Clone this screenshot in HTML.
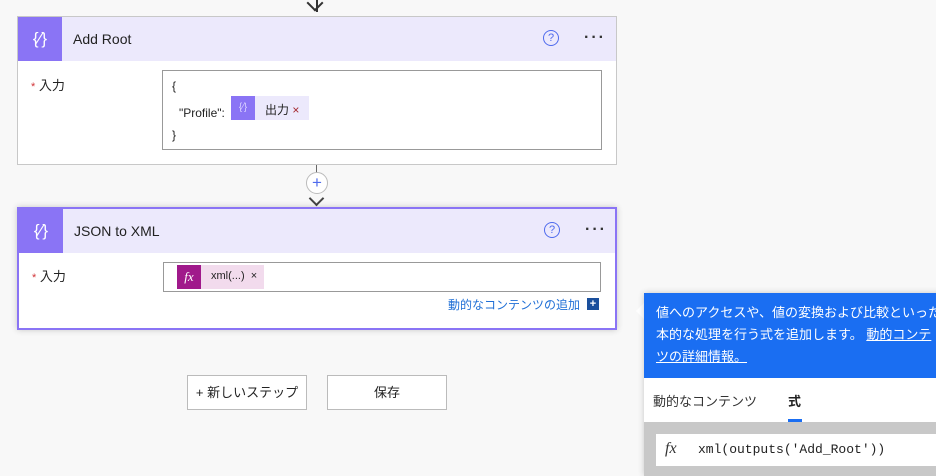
<!DOCTYPE html>
<html><head><meta charset="utf-8"><style>
body{margin:0;width:936px;height:476px;overflow:hidden;background:#f8f8f8;font-family:"Liberation Sans","Noto Sans CJK JP",sans-serif;position:relative;font-size:13px;color:#222}
.a{position:absolute}
.card{position:absolute;left:17px;width:600px;background:#fff;border:1px solid #c8c8c8;box-sizing:border-box}
.hdr{height:44px;background:#ece9fc;position:relative}
.ico{position:absolute;left:0;top:0;width:44px;height:44px;background:#8a74f5;color:#fff;font-size:17px;display:flex;align-items:center;justify-content:center}
.title{position:absolute;left:55px;top:14px;font-size:14px;color:#222}
.help{position:absolute;left:525px;top:13px;width:14px;height:14px;border:1.3px solid #4f6bed;border-radius:50%;color:#4f6bed;font-size:11px;text-align:center;line-height:14px}
.dots{position:absolute;left:566px;top:12px;font-size:16px;letter-spacing:2px;color:#333;font-weight:bold}
.lbl{position:absolute;left:13px;font-size:13px}
.lbl b{color:#d13438;font-weight:normal;font-size:11px}
</style></head><body>
<div class="a" style="left:316px;top:0;width:2px;height:12px;background:#333"></div>
<div class="a" style="left:309px;top:-3px;width:10px;height:10px;border-right:2px solid #333;border-bottom:2px solid #333;transform:rotate(45deg)"></div>

<div class="card" style="top:16px;height:149px">
 <div class="hdr"><div class="ico">{⁄}</div><div class="title">Add Root</div><div class="help">?</div><div class="dots">···</div></div>
 <div class="lbl" style="top:58px"><b>*</b> 入力</div>
 <div class="a" style="left:144px;top:53px;width:438px;height:78px;border:1px solid #999;font-size:12px">
  <div class="a" style="left:9px;top:8px">{</div>
  <div class="a" style="left:16px;top:35px">"Profile":</div>
  <div class="a" style="left:68px;top:25px;width:78px;height:24px;background:#ece9fc">
   <div class="a" style="left:0;top:0;width:24px;height:24px;background:#8a74f5;color:#d8d0ff;font-size:10px;text-align:center;line-height:24px">{⁄}</div>
   <div class="a" style="left:34px;top:5px;font-size:12px">出力 <span style="color:#a4262c">×</span></div>
  </div>
  <div class="a" style="left:9px;top:57px">}</div>
 </div>
</div>

<div class="a" style="left:316px;top:165px;width:1px;height:8px;background:#666"></div>
<div class="a" style="left:306px;top:172px;width:20px;height:20px;border:1.5px solid #bbb;border-radius:50%;background:#fff;color:#4f6bed;text-align:center;line-height:20px;font-size:17px">+</div>
<div class="a" style="left:311px;top:193px;width:9px;height:9px;border-right:2px solid #444;border-bottom:2px solid #444;transform:rotate(45deg)"></div>

<div class="card" style="top:207px;height:123px;border:2px solid #8a74f5;box-shadow:0 0 6px rgba(0,0,0,.2)">
 <div class="hdr"><div class="ico">{⁄}</div><div class="title">JSON to XML</div><div class="help">?</div><div class="dots">···</div></div>
 <div class="lbl" style="top:57px"><b>*</b> 入力</div>
 <div class="a" style="left:144px;top:53px;width:436px;height:28px;border:1px solid #999">
  <div class="a" style="left:13px;top:2px;width:87px;height:24px;background:#f2dbed">
   <div class="a" style="left:0;top:0;width:24px;height:24px;background:#a0198b;color:#fff;font-family:'Liberation Serif',serif;font-style:italic;font-size:13px;text-align:center;line-height:24px">fx</div>
   <div class="a" style="left:34px;top:5px;font-size:11px">xml(...) &nbsp;×</div>
  </div>
 </div>
 <div class="a" style="left:429px;top:87px;font-size:12px;color:#1f6fd6">動的なコンテンツの追加</div>
 <div class="a" style="left:568px;top:89px;width:12px;height:12px;background:#1a4f9c;color:#fff;font-size:11px;line-height:12px;text-align:center;font-weight:bold">+</div>
</div>

<div class="a" style="left:187px;top:375px;width:118px;height:33px;border:1px solid #bbb;background:#fff;text-align:center;line-height:33px;font-size:13px">+ 新しいステップ</div>
<div class="a" style="left:327px;top:375px;width:118px;height:33px;border:1px solid #bbb;background:#fff;text-align:center;line-height:33px;font-size:13px">保存</div>

<div class="a" style="left:636px;top:303px;width:0;height:0;border-top:8px solid transparent;border-bottom:8px solid transparent;border-right:8px solid #fff"></div>
<div class="a" style="left:644px;top:293px;width:300px;height:183px;background:#fff;box-shadow:0 0 6px rgba(0,0,0,.2)">
 <div class="a" style="left:0;top:0;width:300px;height:85px;background:#1a6ef2;color:#fff;font-size:13px;line-height:22px;padding:0 0 0 12px;box-sizing:border-box;white-space:nowrap">
  <div style="margin-top:9px">値へのアクセスや、値の変換および比較といった</div>
  <div>本的な処理を行う式を追加します。 <u>動的コンテ</u></div>
  <div><u>ツの詳細情報。</u></div>
 </div>
 <div class="a" style="left:9px;top:98px;font-size:13px;color:#333">動的なコンテンツ</div>
 <div class="a" style="left:144px;top:98px;font-size:13px;font-weight:bold">式</div>
 <div class="a" style="left:144px;top:126px;width:14px;height:3px;background:#1a6ef2"></div>
 <div class="a" style="left:0;top:129px;width:300px;height:54px;background:#c8c8c8"></div>
 <div class="a" style="left:12px;top:141px;width:288px;height:32px;background:#fff">
  <div class="a" style="left:9px;top:6px;font-family:'Liberation Serif',serif;font-style:italic;font-size:16px;color:#333">fx</div>
  <div class="a" style="left:42px;top:8px;font-family:'Liberation Mono',monospace;font-size:13px">xml(outputs('Add_Root'))</div>
 </div>
</div>
</body></html>
